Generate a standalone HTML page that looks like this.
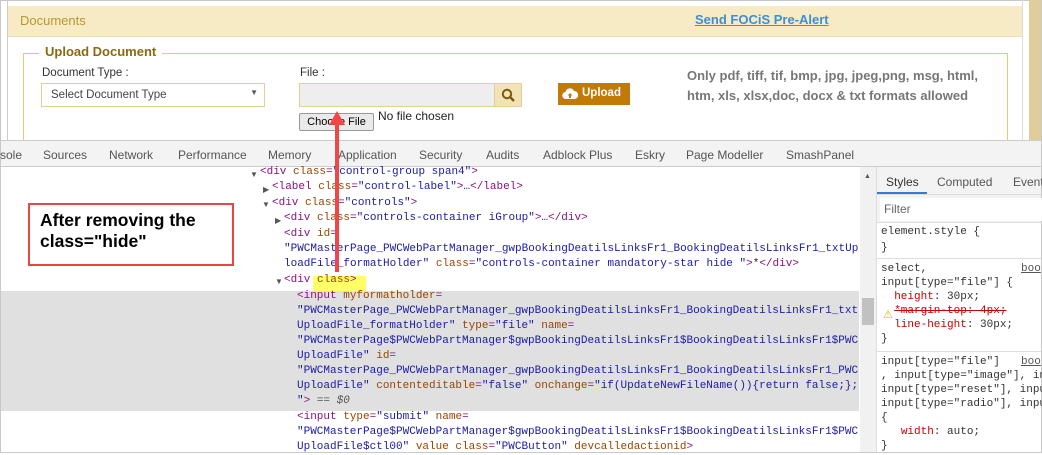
<!DOCTYPE html>
<html><head><meta charset="utf-8"><style>
*{margin:0;padding:0;box-sizing:border-box}
body{width:1042px;height:453px;overflow:hidden;background:#fff;position:relative;font-family:"Liberation Sans",sans-serif}
.a{position:absolute;white-space:nowrap}
.m{font-family:"Liberation Mono",monospace;font-size:11px;line-height:15px;color:#1a1aa6}
.t{color:#881280}.n{color:#994500}.v{color:#1a1aa6}.g{color:#a0a0a0}
.tab{font-size:12px;color:#555;top:148px}
.tri{font-size:8px;color:#555}
</style></head><body>
<div class="a" style="left:0;top:0;width:1042px;height:453px;border:1px solid #c8c8c8"></div>
<div class="a" style="left:7px;top:0;width:1px;height:140px;background:#ccc"></div>
<div class="a" style="left:8px;top:6px;width:1014px;height:31px;background:#f7ebc5;border-bottom:1px solid #efe0b4"></div>
<div class="a" style="left:20px;top:13px;font-size:13px;color:#b8972f">Documents</div>
<div class="a" style="left:695px;top:12px;font-size:13px;font-weight:bold;color:#3a8fd8;text-decoration:underline">Send FOCiS Pre-Alert</div>
<div class="a" style="left:1022px;top:0;width:1px;height:140px;background:#ddd"></div>
<div class="a" style="left:1029px;top:0;width:12px;height:140px;background:#dfcd9c"></div>
<div class="a" style="left:23px;top:53px;width:985px;height:100px;border:1px solid #e8c96b"></div>
<div class="a" style="left:39px;top:44px;background:#fff;padding:0 6px;font-size:13px;font-weight:bold;color:#8a6a10">Upload Document</div>
<div class="a" style="left:42px;top:67px;font-size:11.5px;color:#333">Document Type :</div>
<div class="a" style="left:41px;top:83px;width:224px;height:24px;border:1px solid #e5d090;font-size:11.5px;color:#444;padding:5px 9px">Select Document Type<span style="position:absolute;right:6px;top:4px;font-size:8px;color:#555">▼</span></div>
<div class="a" style="left:300px;top:67px;font-size:11.5px;color:#333">File :</div>
<div class="a" style="left:299px;top:83px;width:196px;height:24px;background:#eee;border:1px solid #e5d090"></div>
<div class="a" style="left:494px;top:83px;width:28px;height:24px;background:#f2e2b8;border:1px solid #e5d090"></div>
<svg class="a" style="left:501px;top:88px" width="15" height="15" viewBox="0 0 15 15"><circle cx="6" cy="6" r="4.2" fill="none" stroke="#7a5a0a" stroke-width="2"/><line x1="9" y1="9" x2="13" y2="13" stroke="#7a5a0a" stroke-width="2.4"/></svg>
<div class="a" style="left:299px;top:113px;width:75px;height:18px;background:#eaeaea;border:1px solid #999;border-radius:2px;font-size:11px;color:#000;text-align:center;line-height:16px">Choose File</div>
<div class="a" style="left:378px;top:109px;font-size:12px;color:#222">No file chosen</div>
<div class="a" style="left:558px;top:83px;width:72px;height:22px;background:#c07a05"></div>
<svg class="a" style="left:562px;top:87px" width="16" height="13" viewBox="0 0 16 13"><path d="M4 12 A3.5 3.5 0 0 1 3.5 5 A4.5 4.5 0 0 1 12 4 A3.5 3.5 0 0 1 12.5 12 Z" fill="#fff"/><path d="M8 6 L5.5 8.5 H7 V11 H9 V8.5 H10.5 Z" fill="#c07a05"/></svg>
<div class="a" style="left:582px;top:87px;font-size:11.5px;font-weight:bold;color:#fff">Upload</div>
<div class="a" style="left:687px;top:66px;font-size:13px;font-weight:bold;color:#777;line-height:20px">Only pdf, tiff, tif, bmp, jpg, jpeg,png, msg, html,<br>htm, xls, xlsx,doc, docx &amp; txt formats allowed</div>
<div class="a" style="left:1px;top:140px;width:1040px;height:27px;background:#f3f3f3;border-top:1px solid #ccc;border-bottom:1px solid #ccc"></div>
<div class="a tab" style="left:0">sole</div>
<div class="a tab" style="left:43px">Sources</div>
<div class="a tab" style="left:109px">Network</div>
<div class="a tab" style="left:178px">Performance</div>
<div class="a tab" style="left:268px">Memory</div>
<div class="a tab" style="left:338px">Application</div>
<div class="a tab" style="left:419px">Security</div>
<div class="a tab" style="left:486px">Audits</div>
<div class="a tab" style="left:543px">Adblock Plus</div>
<div class="a tab" style="left:635px">Eskry</div>
<div class="a tab" style="left:686px">Page Modeller</div>
<div class="a tab" style="left:786px">SmashPanel</div>
<div class="a" style="left:1px;top:291px;width:858px;height:120px;background:#e0e0e0"></div>
<div class="a" style="left:860px;top:167px;width:17px;height:285px;background:#f1f1f1;border-right:1px solid #ddd"></div>
<div class="a" style="left:864px;top:173px;font-size:7px;color:#555">▲</div>
<div class="a" style="left:862px;top:298px;width:12px;height:27px;background:#c1c1c1"></div>
<div class="a tri" style="left:250px;top:170px">▼</div>
<div class="a m" style="left:260px;top:165px"><span class="t">&lt;div </span><span class="n">class</span><span class="t">=</span>"control-group span4"<span class="t">&gt;</span></div>
<div class="a tri" style="left:263px;top:185px">▶</div>
<div class="a m" style="left:272px;top:180px"><span class="t">&lt;label </span><span class="n">class</span><span class="t">=</span>"control-label"<span class="t">&gt;</span>…<span class="t">&lt;/label&gt;</span></div>
<div class="a tri" style="left:262px;top:200px">▼</div>
<div class="a m" style="left:272px;top:196px"><span class="t">&lt;div </span><span class="n">class</span><span class="t">=</span>"controls"<span class="t">&gt;</span></div>
<div class="a tri" style="left:275px;top:216px">▶</div>
<div class="a m" style="left:284px;top:211px"><span class="t">&lt;div </span><span class="n">class</span><span class="t">=</span>"controls-container iGroup"<span class="t">&gt;</span>…<span class="t">&lt;/div&gt;</span></div>
<div class="a m" style="left:284px;top:227px"><span class="t">&lt;div </span><span class="n">id</span><span class="t">=</span></div>
<div class="a m" style="left:284px;top:242px">"PWCMasterPage_PWCWebPartManager_gwpBookingDeatilsLinksFr1_BookingDeatilsLinksFr1_txtUp</div>
<div class="a m" style="left:284px;top:257px">loadFile_formatHolder" <span class="n">class</span><span class="t">=</span>"controls-container mandatory-star hide "<span class="t">&gt;</span><span style="color:#222">*</span><span class="t">&lt;/div&gt;</span></div>
<div class="a tri" style="left:275px;top:277px">▼</div>
<div class="a" style="left:313px;top:276px;width:53px;height:15px;background:#ffff66"></div>
<div class="a m" style="left:284px;top:273px"><span class="t">&lt;div </span><span class="n">class</span><span class="t">&gt;</span></div>
<div class="a m" style="left:297px;top:289px"><span class="t">&lt;input </span><span class="n">myformatholder</span><span class="t">=</span></div>
<div class="a m" style="left:297px;top:304px">"PWCMasterPage_PWCWebPartManager_gwpBookingDeatilsLinksFr1_BookingDeatilsLinksFr1_txt</div>
<div class="a m" style="left:297px;top:319px">UploadFile_formatHolder" <span class="n">type</span><span class="t">=</span>"file" <span class="n">name</span><span class="t">=</span></div>
<div class="a m" style="left:297px;top:334px">"PWCMasterPage$PWCWebPartManager$gwpBookingDeatilsLinksFr1$BookingDeatilsLinksFr1$PWC</div>
<div class="a m" style="left:297px;top:349px">UploadFile" <span class="n">id</span><span class="t">=</span></div>
<div class="a m" style="left:297px;top:364px">"PWCMasterPage_PWCWebPartManager_gwpBookingDeatilsLinksFr1_BookingDeatilsLinksFr1_PWC</div>
<div class="a m" style="left:297px;top:379px">UploadFile" <span class="n">contenteditable</span><span class="t">=</span>"false" <span class="n">onchange</span><span class="t">=</span>"if(UpdateNewFileName()){return false;};</div>
<div class="a m" style="left:297px;top:394px">"<span class="t">&gt;</span> <span style="color:#555">== <i>$0</i></span></div>
<div class="a m" style="left:297px;top:410px"><span class="t">&lt;input </span><span class="n">type</span><span class="t">=</span>"submit" <span class="n">name</span><span class="t">=</span></div>
<div class="a m" style="left:297px;top:425px">"PWCMasterPage$PWCWebPartManager$gwpBookingDeatilsLinksFr1$BookingDeatilsLinksFr1$PWC</div>
<div class="a m" style="left:297px;top:440px">UploadFile$ctl00" <span class="n">value class</span><span class="t">=</span>"PWCButton" <span class="n">devcalledactionid</span><span class="t">&gt;</span></div>
<div class="a" style="left:877px;top:167px;width:164px;height:28px;background:#f3f3f3;border-bottom:1px solid #ddd"></div>
<div class="a" style="left:886px;top:175px;font-size:12px;color:#333">Styles</div>
<div class="a" style="left:937px;top:175px;font-size:12px;color:#555">Computed</div>
<div class="a" style="left:1013px;top:175px;font-size:12px;color:#555">Events</div>
<div class="a" style="left:877px;top:192px;width:50px;height:2px;background:#3879d9"></div>
<div class="a" style="left:877px;top:195px;width:164px;height:28px;background:#f3f3f3;border-bottom:1px solid #ddd"></div>
<div class="a" style="left:880px;top:198px;width:162px;height:23px;background:#fff"></div>
<div class="a" style="left:884px;top:202px;font-size:12px;color:#666">Filter</div>
<div class="a m" style="left:881px;top:224px;color:#333;line-height:16px">element.style {<br>}</div>
<div class="a" style="left:877px;top:258px;width:164px;height:1px;background:#ddd"></div>
<div class="a m" style="left:881px;top:262px;color:#333;line-height:14px">select,<br>input[type="file"] {<br>&nbsp;&nbsp;<span style="color:#c80000">height</span>: 30px;<br>&nbsp;&nbsp;<span style="color:#c80000;text-decoration:line-through">*margin-top: 4px;</span><br>&nbsp;&nbsp;<span style="color:#c80000">line-height</span>: 30px;<br>}</div>
<div class="a" style="left:883px;top:308px;font-size:11px;color:#e8b000">⚠</div>
<div class="a m" style="left:1021px;top:262px;color:#555;text-decoration:underline">boo</div>
<div class="a" style="left:877px;top:351px;width:164px;height:1px;background:#ddd"></div>
<div class="a m" style="left:881px;top:355px;color:#333;line-height:14px">input[type="file"]<br>, input[type="image"], in<br>input[type="reset"], inpu<br>input[type="radio"], inpu<br>{<br>&nbsp;&nbsp;&nbsp;<span style="color:#c80000">width</span>: auto;<br>}</div>
<div class="a m" style="left:1021px;top:355px;color:#555;text-decoration:underline">boo</div>
<div class="a" style="left:335px;top:120px;width:4px;height:152px;background:#f24545"></div>
<svg class="a" style="left:328px;top:111px" width="18" height="16"><path d="M9 0 L17 14 L1 14 Z" fill="#f24545"/></svg>
<div class="a" style="left:28px;top:203px;width:206px;height:63px;border:2px solid #e84545;background:#fff"></div>
<div class="a" style="left:40px;top:210px;font-size:17.5px;font-weight:bold;color:#000;line-height:21px">After removing the<br>class="hide"</div>
</body></html>
